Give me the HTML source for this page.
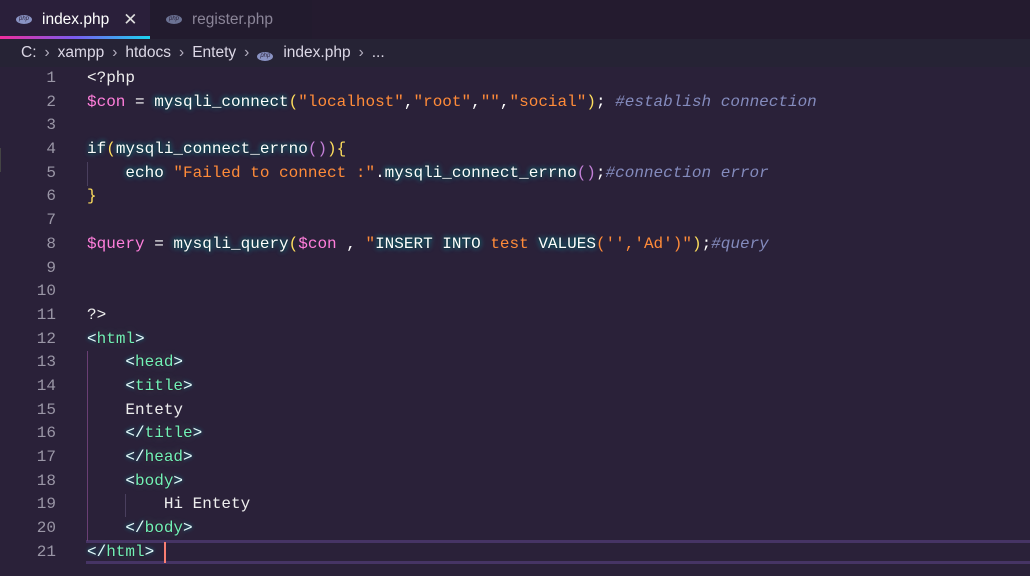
<!DOCTYPE html>
<html><head><meta charset="utf-8">
<style>
*{margin:0;padding:0;box-sizing:border-box}
body{width:1030px;height:576px;overflow:hidden;background:#262335;font-family:"Liberation Sans",sans-serif;position:relative}
.tabs{height:39px;background:#241b2f;position:relative}
.tab{position:absolute;top:0;height:39px;display:flex;align-items:center;font-size:15.5px}
.t1{left:0;width:150px;background:#2a1f3a;color:#fff;padding-left:16px}
.t1:after{content:"";position:absolute;left:0;right:0;bottom:0;height:3px;background:linear-gradient(90deg,#f02d9c,#7a5cf0,#1bd4f0)}
.t2{left:150px;width:162px;background:#221b2e;color:#8b8598;padding-left:16px}
.php{display:inline-block;width:16px;height:9px;border-radius:50%;background:#8a93c4;margin-right:10px;font-size:6px;color:#2a2139;text-align:center;line-height:9px;font-style:italic}
.t1 .x{margin-left:14px;font-size:17px;color:#ddd}
.bc{position:absolute;top:39px;left:0;right:0;height:28px;background:#262335;color:#dcd8e6;font-size:15.5px;padding-left:21px;line-height:28px}
.bc .s{color:#b5b0c0;margin:0 8px}
.ed{position:absolute;top:67px;left:0;right:0;bottom:0;background:#2a2139}
.ln{position:absolute;left:0;top:0;width:56px;text-align:right;color:#9a96a6;font-family:"Liberation Mono",monospace;font-size:16px}
.code{position:absolute;left:87px;top:0;font-family:"Liberation Mono",monospace;font-size:16px;color:#fff}
.l{height:23.7px;line-height:23.7px;white-space:pre}
.w{color:#fdfdfd;text-shadow:0 0 2px #001716,0 0 5px #03edf988,0 0 8px #03edf955}
.v{color:#ff7edb}
.s1{color:#ff8b39}
.c{color:#848bbd;font-style:italic}
.y{color:#fede5d}
.p{color:#c27fd6}
.g{color:#72f1b8;text-shadow:0 0 2px #100c0f,0 0 5px #dc078e33,0 0 8px #72f1b855}
.br{color:#e6fdfd;text-shadow:0 0 4px #03edf977}
.guide{position:absolute;width:1px;background:#4a3f5e}
.cur{position:absolute;left:86px;right:0;top:473px;height:24px;border-top:3px solid #463465;border-bottom:3px solid #463465}
.caret{position:absolute;left:164px;top:475px;width:2px;height:21px;background:#f97e72}
</style></head><body>
<div class="tabs">
 <div class="tab t1"><span class="php">php</span>index.php<span class="x">✕</span></div>
 <div class="tab t2"><span class="php" style="background:#6c7394">php</span>register.php</div>
</div>
<div class="bc">C:<span class="s">›</span>xampp<span class="s">›</span>htdocs<span class="s">›</span>Entety<span class="s">›</span><span class="php">php</span>index.php<span class="s">›</span>...</div>
<div class="ed">
 <div class="cur"></div><div class="caret"></div>
 <div class="guide" style="left:87px;top:95px;height:24px"></div>
 <div class="guide" style="left:87px;top:284px;height:190px;background:#6a3f74"></div>
 <div class="guide" style="left:125px;top:427px;height:23px"></div>
 <div class="guide" style="left:0;top:81px;height:24px;background:#444"></div>
 <div class="ln"><div class="l">1</div><div class="l">2</div><div class="l">3</div><div class="l">4</div><div class="l">5</div><div class="l">6</div><div class="l">7</div><div class="l">8</div><div class="l">9</div><div class="l">10</div><div class="l">11</div><div class="l">12</div><div class="l">13</div><div class="l">14</div><div class="l">15</div><div class="l">16</div><div class="l">17</div><div class="l">18</div><div class="l">19</div><div class="l">20</div><div class="l">21</div></div>
 <div class="code"><div class="l"><span style="color:#eee">&lt;?php</span></div><div class="l"><span class="v">$con</span> = <span class="w">mysqli_connect</span><span class="y">(</span><span class="s1">"localhost"</span>,<span class="s1">"root"</span>,<span class="s1">""</span>,<span class="s1">"social"</span><span class="y">)</span>; <span class="c">#establish connection</span></div><div class="l"> </div><div class="l"><span class="w">if</span><span class="y">(</span><span class="w">mysqli_connect_errno</span><span class="p">()</span><span class="y">){</span></div><div class="l">    <span class="w">echo</span> <span class="s1">"Failed to connect :"</span>.<span class="w">mysqli_connect_errno</span><span class="p">()</span>;<span class="c">#connection error</span></div><div class="l"><span class="y">}</span></div><div class="l"> </div><div class="l"><span class="v">$query</span> = <span class="w">mysqli_query</span><span class="y">(</span><span class="v">$con</span> , <span class="s1">"</span><span class="w">INSERT INTO</span> <span class="s1">test</span> <span class="w">VALUES</span><span class="s1">('','Ad')"</span><span class="y">)</span>;<span class="c">#query</span></div><div class="l"> </div><div class="l"> </div><div class="l"><span style="color:#eee">?&gt;</span></div><div class="l"><span class="br">&lt;</span><span class="g">html</span><span class="br">&gt;</span></div><div class="l">    <span class="br">&lt;</span><span class="g">head</span><span class="br">&gt;</span></div><div class="l">    <span class="br">&lt;</span><span class="g">title</span><span class="br">&gt;</span></div><div class="l">    <span style="color:#eee">Entety</span></div><div class="l">    <span class="br">&lt;/</span><span class="g">title</span><span class="br">&gt;</span></div><div class="l">    <span class="br">&lt;/</span><span class="g">head</span><span class="br">&gt;</span></div><div class="l">    <span class="br">&lt;</span><span class="g">body</span><span class="br">&gt;</span></div><div class="l">        <span style="color:#eee">Hi Entety</span></div><div class="l">    <span class="br">&lt;/</span><span class="g">body</span><span class="br">&gt;</span></div><div class="l"><span class="br">&lt;/</span><span class="g">html</span><span class="br">&gt;</span></div></div>
</div>
</body></html>
